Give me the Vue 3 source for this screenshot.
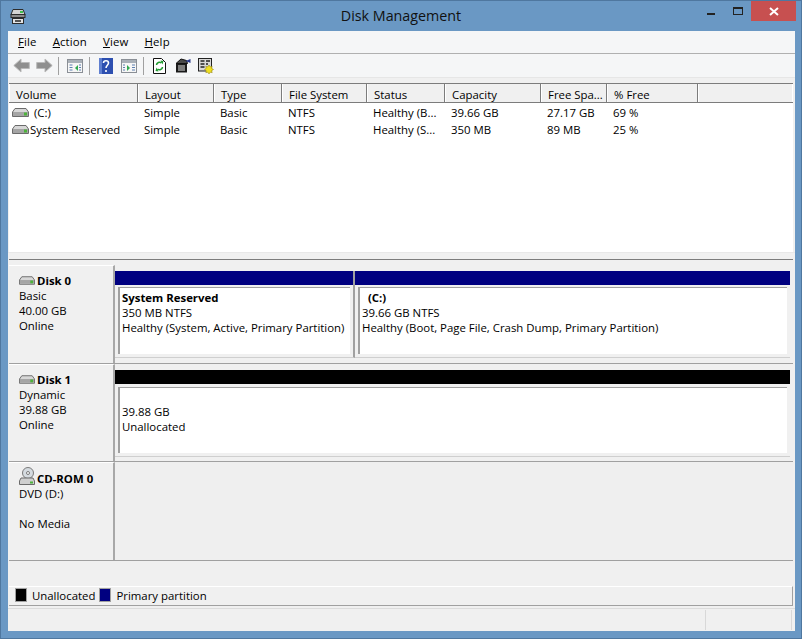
<template>
  <div class="window">
    <header class="titlebar">
      <svg class="app-icon" width="16" height="15" viewBox="0 0 16 15">
        <path d="M3 .500h10l2 5H1z" fill="#d4d4d4" stroke="#2c2c2c"/>
        <rect x="1" y="5.500" width="14" height="3" fill="#8a8a8a" stroke="#2c2c2c"/>
        <rect x="10" y="2" width="3" height="2" fill="#3fc04a"/>
        <rect x="2.500" y="9.500" width="11" height="5" fill="#e4e4e4" stroke="#2c2c2c"/>
        <rect x="5" y="11" width="6" height="2" fill="#555"/>
      </svg>
      <div class="title">Disk Management</div>
      <div class="controls">
        <div class="ctl ctl-min"><span class="min-bar"></span></div>
        <div class="ctl ctl-max"><span class="max-box"></span></div>
        <div class="ctl ctl-close">
          <svg width="10" height="9" viewBox="0 0 10 9"><path d="M1 1l8 7M9 1L1 8" stroke="#fff" stroke-width="2"/></svg>
        </div>
      </div>
    </header>

    <div class="client">
      <nav class="menubar">
        <span v-for="m in menus" :key="m.rest" class="menu-item"><u>{{ m.key }}</u>{{ m.rest }}</span>
      </nav>

      <div class="toolbar">
        <svg class="tb" width="17" height="15" viewBox="0 0 17 15"><path d="M.8 7.500L8 1v3.500h8.300v6H8V14z" fill="#8f8f8f" stroke="#b9b9b9"/></svg>
        <svg class="tb tb-fwd" width="17" height="15" viewBox="0 0 17 15"><path d="M16.200 7.500L9 1v3.500H.7v6H9V14z" fill="#8f8f8f" stroke="#b9b9b9"/></svg>
        <span class="sep sep-a"></span>
        <svg class="tb" width="16" height="14" viewBox="0 0 16 14">
          <rect x="0.500" y="0.500" width="15" height="13" fill="#f6f6f6" stroke="#8a8f96"/>
          <rect x="1" y="1" width="14" height="3" fill="#a9b0b8"/>
          <path d="M8 9l3-3v6z" fill="#2fa84f"/>
          <path d="M2.500 6h3M2.500 8.500h3M2.500 11h3M12 6h2M12 8.500h2M12 11h2" stroke="#5b7fb0"/>
        </svg>
        <span class="sep sep-b"></span>
        <svg class="tb" width="14" height="16" viewBox="0 0 14 16">
          <rect width="14" height="16" fill="#2d4fb0"/>
          <rect x="0" y="0" width="3" height="16" fill="#5f7fd0"/>
          <path d="M4.500 5c0-3 5-3 5 0 0 2-2.500 2.500-2.500 5M7 12v2" fill="none" stroke="#fff" stroke-width="1.600"/>
        </svg>
        <svg class="tb tb-gap" width="16" height="14" viewBox="0 0 16 14">
          <rect x="0.500" y="0.500" width="15" height="13" fill="#f6f6f6" stroke="#8a8f96"/>
          <rect x="1" y="1" width="14" height="3" fill="#a9b0b8"/>
          <path d="M6 6l3 3-3 3z" fill="#2fa84f"/>
          <path d="M2 6h2M2 8.500h2M2 11h2M11 6h3M11 8.500h3M11 11h3" stroke="#5b7fb0"/>
        </svg>
        <span class="sep sep-c"></span>
        <svg class="tb" width="13" height="16" viewBox="0 0 13 16">
          <path d="M0.500 0.500h8l4 4v11H0.500z" fill="#fff" stroke="#111"/>
          <path d="M3.500 7a3 3 0 0 1 5-2M9.500 9a3 3 0 0 1-5 2" fill="none" stroke="#1f9a2f" stroke-width="1.600"/>
          <path d="M7.500 2.500l3 .500-1 3.500zM5.500 13.500l-3-.500 1-3.500z" fill="#1f9a2f"/>
        </svg>
        <svg class="tb tb-prop" width="16" height="15" viewBox="0 0 16 15">
          <path d="M1 5.500h11v9H1z" fill="#1a1a1a"/>
          <path d="M1 5.500l5-4.500 5.500 1.500 1 3z" fill="#4a4a4a" stroke="#111"/>
          <path d="M3 8h7M3 10h7M3 12h7" stroke="#e0e0e0"/>
          <path d="M10.500 3l5-2v4z" fill="#2a3a8c"/>
        </svg>
        <svg class="tb tb-set" width="16" height="16" viewBox="0 0 16 16">
          <rect x="0.500" y="0.500" width="13" height="12.500" fill="#d8d8d8" stroke="#222"/>
          <path d="M2.500 3h4M2.500 6h4M2.500 9h4M8 3h4M8 6h2" stroke="#222" stroke-width="1.500"/>
          <path d="M11 7l1.200 1.800 2-.5-.5 2 1.800 1.200-1.800 1.200.5 2-2-.5L11 16l-1.200-1.800-2 .5.500-2L6.500 11.500l1.800-1.200-.5-2 2 .5z" fill="#f0e020" stroke="#8a7a10" stroke-width="0.500"/>
        </svg>
      </div>
      <div class="toolbar-foot"></div>

      <section class="list">
        <div class="thead">
          <div v-for="c in columns" :key="c.label" class="th" :style="{ width: c.width + 'px' }">{{ c.label }}</div>
          <div class="th th-fill"></div>
        </div>
        <div class="tbody">
          <div v-for="r in rows" :key="r.name" class="tr">
            <div class="td td-name" :style="{ width: columns[0].width + 'px' }">
              <svg class="drive" width="17" height="9" viewBox="0 0 17 9">
                <path d="M3 .500h11l2.500 3.500v4.500H.500V4z" fill="#d7d7d7" stroke="#6b6b6b"/>
                <rect x="1" y="4" width="15" height="4" fill="#a5a5a5"/>
                <rect x="12" y="4.500" width="3" height="3" fill="#4cb33a"/>
              </svg>
              <span :class="{ 'c-name': r.name === '(C:)' }">{{ r.name }}</span>
            </div>
            <div v-for="(v, i) in r.cells" :key="i" class="td" :style="{ width: columns[i + 1].width + 'px' }">{{ v }}</div>
          </div>
        </div>
      </section>

      <div class="splitter"></div>

      <section class="disks">
        <div class="disk disk-0">
          <div class="disk-label">
            <div class="disk-name">
              <svg width="16" height="9" viewBox="0 0 17 9">
                <path d="M3 .500h11l2.500 3.500v4.500H.500V4z" fill="#d7d7d7" stroke="#6b6b6b"/>
                <rect x="1" y="4" width="15" height="4" fill="#a5a5a5"/>
                <rect x="12" y="4.500" width="3" height="3" fill="#4cb33a"/>
              </svg>
              <b>Disk 0</b>
            </div>
            <div>Basic</div><div>40.00 GB</div><div>Online</div>
          </div>
          <div class="disk-body">
            <div class="part part-sys">
              <div class="bar bar-blue"></div>
              <div class="box">
                <b>System Reserved</b>
                <div>350 MB NTFS</div>
                <div>Healthy (System, Active, Primary Partition)</div>
              </div>
            </div>
            <div class="part part-c">
              <div class="bar bar-blue"></div>
              <div class="box">
                <b class="c-title">(C:)</b>
                <div>39.66 GB NTFS</div>
                <div>Healthy (Boot, Page File, Crash Dump, Primary Partition)</div>
              </div>
            </div>
          </div>
        </div>

        <div class="disk disk-1">
          <div class="disk-label">
            <div class="disk-name">
              <svg width="16" height="9" viewBox="0 0 17 9">
                <path d="M3 .500h11l2.500 3.500v4.500H.500V4z" fill="#d7d7d7" stroke="#6b6b6b"/>
                <rect x="1" y="4" width="15" height="4" fill="#a5a5a5"/>
                <rect x="12" y="4.500" width="3" height="3" fill="#4cb33a"/>
              </svg>
              <b>Disk 1</b>
            </div>
            <div>Dynamic</div><div>39.88 GB</div><div>Online</div>
          </div>
          <div class="disk-body">
            <div class="part part-full">
              <div class="bar bar-black"></div>
              <div class="box box-un">
                <div>39.88 GB</div>
                <div>Unallocated</div>
              </div>
            </div>
          </div>
        </div>

        <div class="disk disk-cd">
          <div class="disk-label disk-label-cd">
            <div class="disk-name">
              <svg class="cd-icon" width="16" height="18" viewBox="0 0 16 18">
                <circle cx="9" cy="6" r="5.500" fill="#d5dbe0" stroke="#7a7a7a"/>
                <circle cx="9" cy="6" r="1.500" fill="#fff" stroke="#7a7a7a"/>
                <path d="M2 11h12l1.500 3v3.500H.500V14z" fill="#cfcfcf" stroke="#6b6b6b"/>
                <rect x="11" y="14.500" width="3" height="2" fill="#4cb33a"/>
              </svg>
              <b>CD-ROM 0</b>
            </div>
            <div>DVD (D:)</div><div class="blank"></div><div>No Media</div>
          </div>
          <div class="disk-body disk-body-empty"></div>
        </div>
      </section>

      <div class="legend-gap"></div>
      <footer class="legend">
        <span class="swatch swatch-black"></span><span class="legend-text">Unallocated</span>
        <span class="swatch swatch-blue"></span><span class="legend-text">Primary partition</span>
      </footer>
      <div class="status">
        <span class="st st-a"></span>
        <span class="st st-b"></span>
      </div>
    </div>
  </div>
</template>

<script setup>
const menus = [
  { key: 'F', rest: 'ile' },
  { key: 'A', rest: 'ction' },
  { key: 'V', rest: 'iew' },
  { key: 'H', rest: 'elp' },
]
const columns = [
  { label: 'Volume', width: 129 },
  { label: 'Layout', width: 76 },
  { label: 'Type', width: 68 },
  { label: 'File System', width: 85 },
  { label: 'Status', width: 78 },
  { label: 'Capacity', width: 96 },
  { label: 'Free Spa...', width: 66 },
  { label: '% Free', width: 91 },
]
const rows = [
  { name: '(C:)', cells: ['Simple', 'Basic', 'NTFS', 'Healthy (B...', '39.66 GB', '27.17 GB', '69 %'] },
  { name: 'System Reserved', cells: ['Simple', 'Basic', 'NTFS', 'Healthy (S...', '350 MB', '89 MB', '25 %'] },
]
</script>

<style>
html, body { margin: 0; padding: 0; }
</style>

<style scoped>
.window {
  width: 802px;
  height: 639px;
  box-sizing: border-box;
  background: #6a98c4;
  border: 1px solid #4f779f;
  display: flex;
  flex-direction: column;
  font-family: "Open Sans", "Noto Sans", sans-serif;
  font-size: 11.400px;
  line-height: 15px;
  color: #000;
  overflow: hidden;
}
.titlebar {
  height: 30px;
  flex: none;
  display: flex;
  align-items: flex-start;
  position: relative;
}
.app-icon { margin: 8px 0 0 9px; }
.title {
  position: absolute;
  left: 0;
  right: 0;
  top: 5px;
  text-align: center;
  font-size: 14.300px;
  line-height: 20px;
  color: #111;
}
.controls { margin-left: auto; display: flex; margin-right: 5px; position: relative; }
.ctl { height: 20px; display: flex; align-items: center; justify-content: center; }
.ctl-min { width: 27px; }
.ctl-max { width: 27px; }
.ctl-close { width: 45px; background: #c75050; }
.min-bar { width: 8px; height: 2px; background: #222; margin-top: 6px; }
.max-box { width: 8px; height: 5px; border: 1px solid #222; border-top-width: 2px; }
.client {
  flex: 1;
  margin: 0 6px 7px 7px;
  display: flex;
  flex-direction: column;
  background: #f0f0f0;
  min-height: 0;
}
.menubar {
  height: 23px;
  flex: none;
  box-sizing: border-box;
  background: #f5f6f7;
  border-bottom: 1px solid #b0b0b0;
  display: flex;
  padding: 3px 0 0 10px;
  gap: 16px;
}
.menu-item { line-height: 16px; letter-spacing: 0.150px; }
.toolbar {
  height: 23px;
  flex: none;
  background: #f5f6f7;
  display: flex;
  align-items: center;
  padding-left: 5px;
}
.tb { flex: none; display: block; }
.tb-fwd { margin-left: 6px; }
.tb-gap { margin-left: 8px; }
.tb-prop { margin-left: 9px; }
.tb-set { margin-left: 7px; }
.sep { width: 1px; height: 18px; background: #a0a0a0; flex: none; }
.sep-a { margin: 0 8px 0 5px; }
.sep-b { margin: 0 9px 0 6px; }
.sep-c { margin: 0 9px 0 6px; }
.toolbar-foot {
  height: 6px;
  flex: none;
  background: #f0f0f0;
  border-top: 1px solid #e6e6e6;
  box-sizing: border-box;
}
.list {
  height: 169px;
  flex: none;
  margin: 0 2px 0 1px;
  background: #fff;
  display: flex;
  flex-direction: column;
}
.thead {
  display: flex;
  height: 20px;
  flex: none;
  background: #f0f0f0;
  border-top: 1px solid #7c7c7c;
  border-bottom: 1px solid #7c7c7c;
  box-sizing: border-box;
}
.th {
  box-sizing: border-box;
  padding: 3px 0 0 6px;
  border-right: 1px solid #7c7c7c;
  border-left: 1px solid #fff;
  flex: none;
  white-space: nowrap;
}
.th-fill { flex: 1; border-right: 1px solid #fff; }
.tbody { padding-top: 1px; }
.tr { display: flex; height: 17px; align-items: center; }
.td { box-sizing: border-box; padding-left: 6px; flex: none; white-space: nowrap; overflow: hidden; }
.td-name { padding-left: 3px; display: flex; align-items: center; }
.drive { margin-right: 1px; flex: none; }
.c-name { margin-left: 4px; }
.splitter {
  height: 7px;
  flex: none;
  border-top: 1px solid #e8e8e8;
  box-sizing: border-box;
  background: #f0f0f0;
}
.disks {
  flex: none;
  margin: 0 2px 0 1px;
  border-top: 1px solid #7c7c7c;
  border-bottom: 1px solid #a0a0a0;
  padding-top: 5px;
  height: 302px;
  box-sizing: border-box;
  display: flex;
  flex-direction: column;
}
.disk { display: flex; flex: none; border-bottom: 1px solid #a0a0a0; box-sizing: border-box; }
.disk-0 { height: 99px; }
.disk-1 { height: 98px; }
.disk-cd { flex: 1; border-bottom: none; }
.disk-label {
  width: 106px;
  flex: none;
  box-sizing: border-box;
  border-right: 2px solid #a8a8a8;
  border-top: 1px solid #fff;
  padding: 6px 0 0 10px;
}
.disk-label-cd { padding-top: 7px; }
.disk-name { display: flex; align-items: flex-end; height: 16px; }
.disk-name svg { margin-right: 2px; flex: none; margin-bottom: 3px; }
.disk-name .cd-icon { margin-bottom: 1px; }
.disk-label > div:not(.disk-name) { height: 15px; }
.disk-body { flex: 1; display: flex; padding: 6px 3px 0 0; }
.disk-body-empty { background: #efefef; padding: 0; }
.part {
  display: flex;
  flex-direction: column;
  box-sizing: border-box;
  height: 87px;
  border-bottom: 1px solid #cfcfcf;
}
.part-sys { width: 240px; flex: none; border-right: 2px solid #a0a0a0; }
.part-c { flex: 1; }
.part-full { flex: 1; }
.bar { height: 14px; flex: none; }
.bar-blue { background: #000080; }
.bar-black { background: #000; }
.box {
  margin: 2px 3px 0 3px;
  height: 67px;
  background: #fff;
  border-top: 1px solid #a0a0a0;
  border-left: 2px solid #a0a0a0;
  box-sizing: border-box;
  padding: 2px 0 0 2px;
  white-space: nowrap;
}
.box b { display: block; }
.c-title { padding-left: 6px; }
.box-un { margin-top: 3px; height: 66px; padding-top: 16px; }
.legend-gap { height: 25px; flex: none; }
.legend {
  height: 20px;
  flex: none;
  box-sizing: border-box;
  margin: 0 2px 0 1px;
  border-top: 1px solid #fff;
  border-bottom: 1px solid #a0a0a0;
  border-right: 1px solid #a0a0a0;
  display: flex;
  align-items: center;
  padding: 0 0 2px 6px;
}
.swatch { width: 10px; height: 12px; border: 1px solid #a0a0a0; flex: none; }
.swatch-black { background: #000; }
.swatch-blue { background: #000080; }
.legend-text { margin: 0 4px 0 5px; }
.status {
  height: 22px;
  margin-top: 2px;
  flex: none;
  border-top: 1px solid #dcdcdc;
  display: flex;
  justify-content: flex-end;
  box-sizing: border-box;
  padding: 1px 3px 0 0;
}
.st { border-right: 1px solid #d8d8d8; }
.st-a { width: 2px; }
.st-b { width: 85px; }
</style>
